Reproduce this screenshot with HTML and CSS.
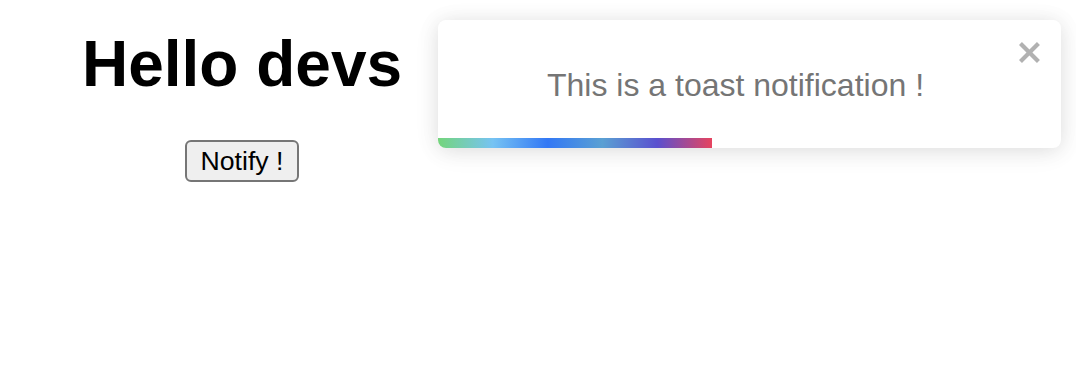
FILE: index.html
```html
<!DOCTYPE html>
<html>
<head>
<meta charset="utf-8">
<link rel="stylesheet" href="styles.css">
</head>
<body>
<div class="app">
  <h1 class="title">Hello devs</h1>
  <button class="notify">Notify !</button>
</div>
<div class="toast">
  <div class="toast-body">This is a toast notification !</div>
  <button class="toast-close" aria-label="close">
    <svg viewBox="0 0 14 16" width="28" height="32"><path fill-rule="evenodd" d="M7.71 8.23l3.75 3.75-1.48 1.48-3.75-3.75-3.75 3.75L1 11.98l3.75-3.75L1 4.48 2.48 3l3.75 3.75L9.98 3l1.48 1.48-3.75 3.75z"/></svg>
  </button>
  <div class="toast-progress" style="width: 44%"></div>
</div>
</body>
</html>
```
FILE: styles.css
```css
html, body {
  margin: 0;
  padding: 0;
  background: #fff;
}
body {
  font-family: "Liberation Sans", Arial, Helvetica, sans-serif;
}
.app {
  width: 484px;
  text-align: center;
}
.title {
  margin: 27px 0 39px;
  font-size: 64px;
  line-height: 74px;
  font-weight: bold;
  color: #000;
}
.notify {
  font-family: "Liberation Sans", Arial, sans-serif;
  font-size: 26.67px;
  line-height: 30px;
  padding: 4px 14px;
  border: 2px solid #767676;
  border-radius: 6px;
  background: #efefef;
  color: #000;
}
.toast {
  position: absolute;
  top: 20px;
  right: 15px;
  width: 623px;
  min-height: 128px;
  box-sizing: border-box;
  padding: 16px;
  display: flex;
  background: #fff;
  border-radius: 8px;
  box-shadow: 0 2px 20px 0 rgba(0,0,0,0.1), 0 4px 30px 0 rgba(0,0,0,0.05);
  overflow: hidden;
}
.toast-body {
  flex: 1;
  display: flex;
  align-items: center;
  justify-content: center;
  font-size: 32px;
  color: #757575;
  padding: 2px 12px 0;
}
.toast-close {
  align-self: flex-start;
  width: 28px;
  height: 32px;
  padding: 0;
  border: 0;
  background: transparent;
  color: #000;
  opacity: 0.3;
}
.toast-close svg {
  display: block;
  fill: currentColor;
}
.toast-progress {
  position: absolute;
  left: 0;
  bottom: 0;
  height: 10px;
  background: linear-gradient(to right, #74d57b, #76c3f3, #3378f5, #5aa0d3, #5a50cf, #e6445f);
}
```
